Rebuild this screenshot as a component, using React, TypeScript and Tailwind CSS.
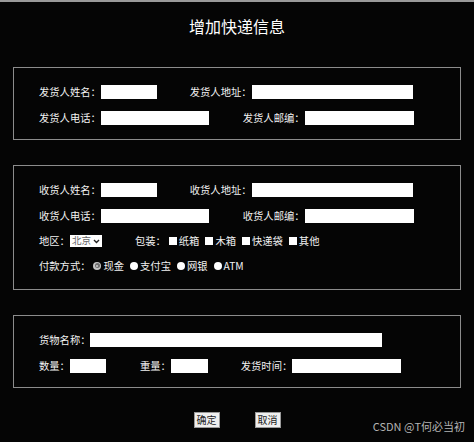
import React from 'react'

const font = { fontFamily: '"Noto Sans CJK SC", "Noto Sans", sans-serif' }

const Field = ({ w }: { w: string }) => <span className={`inline-block h-[14px] bg-white ${w}`} />

const Check = ({ label }: { label: string }) => (
  <span className="flex items-center mr-[6px]">
    <span className="inline-block w-[8px] h-[8px] bg-white mr-[2px]" />
    <span>{label}</span>
  </span>
)

const Radio = ({ label, checked }: { label: string; checked?: boolean }) => (
  <span className="flex items-center mr-[6px]">
    {checked ? (
      <span className="flex items-center justify-center w-[8px] h-[8px] rounded-full bg-[#c4c4c4] mr-[2px]">
        <span className="w-[5px] h-[5px] rounded-full bg-[#6e6e6e] flex items-center justify-center">
          <span className="w-[2px] h-[2px] rounded-full bg-[#cfcfcf]" />
        </span>
      </span>
    ) : (
      <span className="inline-block w-[8px] h-[8px] rounded-full bg-white mr-[2px]" />
    )}
    <span>{label}</span>
  </span>
)

export default function App() {
  return (
    <div className="relative w-full min-h-[442px] bg-[#050505] text-[#f2f2f2] text-[10.3px] leading-none" style={font}>
      <div className="h-[2px] bg-[#9a9a9a]" />

      <div className="mt-[12px] h-[24px] flex items-center justify-center text-[16px] text-white">增加快递信息</div>

      {/* 发货人 */}
      <div className="mx-[13px] mt-[29px] border border-[#8c8c8c] pl-[25px] pt-[17px] pb-[14px]">
        <div className="flex items-center h-[14px]">
          <span>发货人姓名：</span>
          <Field w="w-[56px]" />
          <span className="ml-[33px]">发货人地址：</span>
          <Field w="w-[161px]" />
        </div>
        <div className="flex items-center h-[14px] mt-[12px]">
          <span>发货人电话：</span>
          <Field w="w-[108px]" />
          <span className="ml-[34px]">发货人邮编：</span>
          <Field w="w-[109px]" />
        </div>
      </div>

      {/* 收货人 */}
      <div className="mx-[13px] mt-[25px] border border-[#8c8c8c] pl-[25px] pt-[17px] pb-[16px]">
        <div className="flex items-center h-[14px]">
          <span>收货人姓名：</span>
          <Field w="w-[56px]" />
          <span className="ml-[33px]">收货人地址：</span>
          <Field w="w-[161px]" />
        </div>
        <div className="flex items-center h-[14px] mt-[12px]">
          <span>收货人电话：</span>
          <Field w="w-[108px]" />
          <span className="ml-[34px]">收货人邮编：</span>
          <Field w="w-[109px]" />
        </div>
        <div className="flex items-center h-[14px] mt-[11px]">
          <span>地区：</span>
          <span className="flex items-center justify-between w-[32px] h-[12px] bg-white pl-[2px] pr-[2px] text-[#666] text-[9.5px]">
            北京
            <svg width="7" height="5" viewBox="0 0 7 5" fill="none">
              <path d="M1 1l2.5 2.5L6 1" stroke="#222" strokeWidth="1.4" />
            </svg>
          </span>
          <span className="ml-[33px] mr-[3px]">包装：</span>
          <Check label="纸箱" />
          <Check label="木箱" />
          <Check label="快递袋" />
          <Check label="其他" />
        </div>
        <div className="flex items-center h-[14px] mt-[11px]">
          <span className="mr-[3px]">付款方式：</span>
          <Radio label="现金" checked />
          <Radio label="支付宝" />
          <Radio label="网银" />
          <Radio label="ATM" />
        </div>
      </div>

      {/* 货物 */}
      <div className="mx-[13px] mt-[25px] border border-[#8c8c8c] pl-[25px] pt-[17px] pb-[14px]">
        <div className="flex items-center h-[14px]">
          <span>货物名称：</span>
          <Field w="w-[292px]" />
        </div>
        <div className="flex items-center h-[14px] mt-[12px]">
          <span>数量：</span>
          <Field w="w-[36px]" />
          <span className="ml-[34px]">重量：</span>
          <Field w="w-[37px]" />
          <span className="ml-[33px]">发货时间：</span>
          <Field w="w-[109px]" />
        </div>
      </div>

      <div className="mt-[24px] flex justify-center gap-[35px]">
        <button className="w-[26px] h-[16px] bg-[#efefef] border border-[#9a9a9a] text-[#222] text-[10px] flex items-center justify-center" style={font}>确定</button>
        <button className="w-[26px] h-[16px] bg-[#efefef] border border-[#9a9a9a] text-[#222] text-[10px] flex items-center justify-center" style={font}>取消</button>
      </div>

      <div className="absolute right-[9px] top-[421px] text-[11px] text-[#b4b4b4]">CSDN @T何必当初</div>
    </div>
  )
}
